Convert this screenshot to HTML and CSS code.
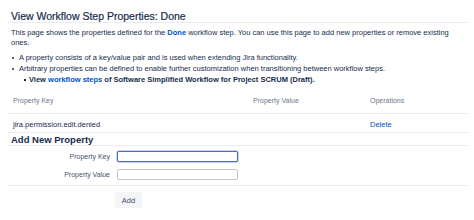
FILE: index.html
```html
<!DOCTYPE html>
<html>
<head>
<meta charset="utf-8">
<link rel="stylesheet" href="styles.css">
</head>
<body>
<div class="page">
  <h2 class="title">View Workflow Step Properties: Done</h2>
  <p class="intro"><span>This page shows the properties defined for the</span> <a class="link strong" href="#">Done</a> <span>workflow step. You can use this page to add new properties or remove existing</span> <span>ones.</span></p>
  <ul class="notes">
    <li>A property consists of a key/value pair and is used when extending Jira functionality.</li>
    <li>Arbitrary properties can be defined to enable further customization when transitioning between workflow steps.
      <ul class="sub">
        <li><b>View <a class="link" href="#">workflow steps</a> of Software Simplified Workflow for Project SCRUM (Draft).</b></li>
      </ul>
    </li>
  </ul>
  <div class="table">
    <div class="row head">
      <div class="c1">Property Key</div>
      <div class="c2">Property Value</div>
      <div class="c3">Operations</div>
    </div>
    <div class="row data">
      <div class="c1">jira.permission.edit.denied</div>
      <div class="c2"></div>
      <div class="c3"><a class="link" href="#">Delete</a></div>
    </div>
  </div>
  <form class="form">
    <h3 class="form-title">Add New Property</h3>
    <div class="fields">
      <div class="field">
        <label class="label">Property Key</label>
        <input class="input focus" type="text">
      </div>
      <div class="field">
        <label class="label">Property Value</label>
        <input class="input" type="text">
      </div>
    </div>
    <div class="buttons">
      <button class="btn" type="button">Add</button>
    </div>
  </form>
</div>
</body>
</html>
```

FILE: styles.css
```css
html, body {
  margin: 0;
  padding: 0;
  background: #ffffff;
}
body {
  font-family: "Liberation Sans", Arial, sans-serif;
  color: #172b4d;
  font-size: 7.5px;
}
.page {
  padding: 10px 6px 0 8px;
  width: 460px;
}
.title {
  margin: 0 0 0 3px;
  font-size: 10.5px;
  font-weight: normal;
  line-height: 12px;
  height: 12px;
  color: #172b4d;
  -webkit-text-stroke: 0.2px #172b4d;
}
.intro {
  margin: 0;
  border-top: 1px solid #ebecf0;
  padding: 5px 0 0 3px;
  line-height: 10px;
}
.link {
  color: #0052cc;
  text-decoration: none;
}
.strong {
  font-weight: bold;
}
.notes {
  margin: 4px 0 0 0;
  padding: 0 0 0 11px;
  line-height: 11px;
  list-style: none;
}
.notes li {
  position: relative;
}
.notes > li::before {
  content: "";
  position: absolute;
  left: -7px;
  top: 5px;
  width: 2px;
  height: 2px;
  background: #172b4d;
  border-radius: 1px;
}
.sub {
  margin: 0;
  padding: 0 0 0 10px;
  list-style: none;
}
.sub li::before {
  content: "";
  position: absolute;
  left: -5px;
  top: 5px;
  width: 2px;
  height: 2px;
  background: #172b4d;
}
.table {
  margin-top: 9px;
}
.row {
  display: flex;
  border-bottom: 1px solid #ebecf0;
}
.row > div {
  padding: 0 5px;
  box-sizing: border-box;
}
.c1 { width: 240px; }
.c2 { width: 117px; }
.c3 { flex: 1; }
.head {
  height: 20px;
  padding-top: 2px;
  box-sizing: border-box;
  line-height: 10px;
  color: #6b778c;
  font-size: 7px;
}
.data {
  height: 19px;
  padding-top: 6px;
  box-sizing: border-box;
  line-height: 10px;
}
.form {
  margin: 0;
}
.form-title {
  margin: 0 0 0 3px;
  padding-top: 1px;
  font-size: 9.5px;
  line-height: 11px;
  height: 11px;
  font-weight: bold;
  color: #172b4d;
}
.fields {
  border-top: 1px solid #ebecf0;
  border-bottom: 1px solid #ebecf0;
  padding: 4px 0 5px 0;
  display: flex;
  flex-direction: column;
  gap: 6px;
}
.field {
  display: flex;
  align-items: center;
  height: 12px;
}
.label {
  width: 102px;
  text-align: right;
  color: #42526e;
  font-size: 7px;
  margin-right: 7px;
}
.input {
  box-sizing: border-box;
  width: 121px;
  height: 11px;
  margin: 0;
  padding: 0 2px;
  border: 1px solid #c1c7d0;
  border-radius: 2px;
  background: #ffffff;
  outline: none;
  font-size: 7px;
}
.input.focus {
  border: 1px solid #4f6db8;
  box-shadow: 0 0 0 0.5px #8fa6d9;
}
.buttons {
  padding: 6px 0 0 107px;
}
.btn {
  width: 27px;
  height: 16px;
  border: none;
  border-radius: 2px;
  background: #f4f5f7;
  color: #42526e;
  font-family: "Liberation Sans", Arial, sans-serif;
  font-size: 7.5px;
  padding: 0;
}
```
